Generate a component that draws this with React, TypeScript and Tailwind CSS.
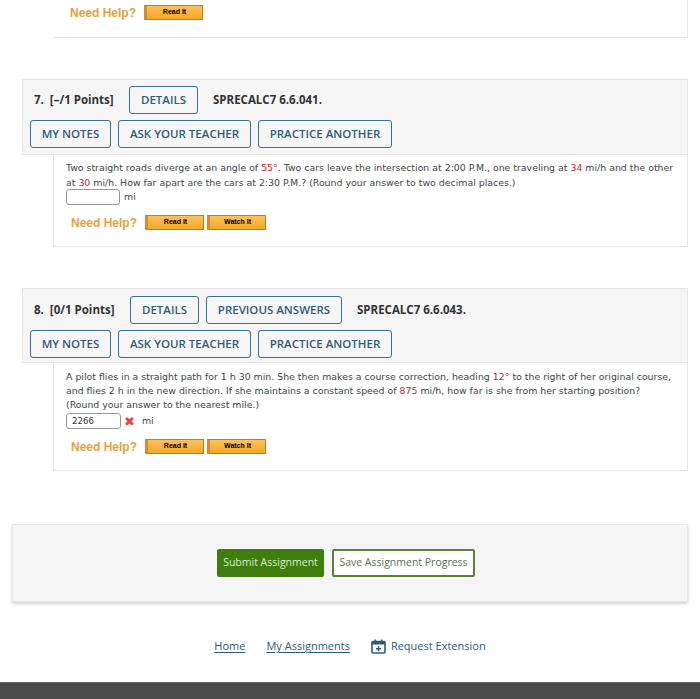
import React from "react";

const hdrFont = { fontFamily: '"Open Sans", "Liberation Sans", sans-serif' };

function HelpBtn({ label }: { label: string }) {
  return (
    <div
      className="w-[59px] h-[15px] flex items-center justify-center border border-[#b77f2a] border-l-[3px] border-l-[#d38f2a] bg-gradient-to-b from-[#fcc15a] to-[#f5a623] text-[7px] font-bold text-black"
      style={{ fontFamily: '"Liberation Sans", Arial, sans-serif' }}
    >
      {label}
    </div>
  );
}

function NeedHelp({ watch }: { watch?: boolean }) {
  return (
    <div className="flex items-center">
      <span
        className="text-[12px] font-bold text-[#e6a13e] leading-none"
        style={{ fontFamily: '"Liberation Sans", Arial, sans-serif' }}
      >
        Need Help?
      </span>
      <div className="ml-[8px] flex gap-[3px]">
        <HelpBtn label="Read It" />
        {watch && <HelpBtn label="Watch It" />}
      </div>
    </div>
  );
}

function OBtn({ children, w }: { children: React.ReactNode; w: string }) {
  return (
    <div
      className={`${w} h-[28px] flex items-center justify-center rounded-[3px] border-[1.5px] border-[#3d6d89] bg-[#f5f5f5] text-[11.5px] font-semibold text-[#2e5b7a] whitespace-nowrap`}
      style={hdrFont}
    >
      {children}
    </div>
  );
}

function Red({ children }: { children: React.ReactNode }) {
  return <span className="text-[#c4242b]">{children}</span>;
}

const bodyFont = { fontFamily: '"DejaVu Sans", Verdana, sans-serif' };

export default function App() {
  return (
    <div className="w-[700px] h-[699px] bg-white flex flex-col overflow-hidden">
      {/* top card remainder */}
      <div className="ml-[53px] w-[635px] h-[38px] border-r border-b border-[#e6e6e6] pl-[17px] pt-[5px]">
        <NeedHelp />
      </div>

      {/* Question 7 */}
      <div className="mt-[41px] ml-[22px] w-[666px] h-[76px] bg-[#f5f5f5] border border-[#e6e6e6] pl-[7px] pt-[6px] flex flex-col gap-[6px]">
        <div className="flex items-center">
          <span className="ml-[4px] text-[11.5px] font-bold text-[#333] w-[95px]" style={hdrFont}>
            7.&nbsp; [–/1 Points]
          </span>
          <OBtn w="w-[69px]">DETAILS</OBtn>
          <span className="ml-[15px] text-[11.5px] font-bold text-[#333]" style={hdrFont}>
            SPRECALC7 6.6.041.
          </span>
        </div>
        <div className="flex gap-[7px]">
          <OBtn w="w-[81px]">MY NOTES</OBtn>
          <OBtn w="w-[133px]">ASK YOUR TEACHER</OBtn>
          <OBtn w="w-[134px]">PRACTICE ANOTHER</OBtn>
        </div>
      </div>
      <div className="ml-[53px] w-[635px] h-[92px] border-l border-r border-b border-[#e6e6e6] pl-[12px] pr-[8px] pt-[5px]">
        <p className="text-[9.4px] leading-[15px] text-[#444]" style={bodyFont}>
          Two straight roads diverge at an angle of <Red>55°</Red>. Two cars leave the intersection at 2:00 P.M., one traveling at <Red>34</Red> mi/h and the other at <Red>30</Red> mi/h. How far apart are the cars at 2:30 P.M.? (Round your answer to two decimal places.)
        </p>
        <div className="flex items-center mt-[-1px]">
          <div className="w-[54px] h-[16px] border border-[#999] rounded-[3px] bg-white" />
          <span className="ml-[4px] text-[9.4px] text-[#444]" style={bodyFont}>mi</span>
        </div>
        <div className="mt-[10px] pl-[5px]">
          <NeedHelp watch />
        </div>
      </div>

      {/* Question 8 */}
      <div className="mt-[41px] ml-[22px] w-[666px] h-[75px] bg-[#f5f5f5] border border-[#e6e6e6] pl-[7px] pt-[7px] flex flex-col gap-[6px]">
        <div className="flex items-center">
          <span className="ml-[4px] text-[11.5px] font-bold text-[#333] w-[96px]" style={hdrFont}>
            8.&nbsp; [0/1 Points]
          </span>
          <OBtn w="w-[69px]">DETAILS</OBtn>
          <div className="ml-[7px]">
            <OBtn w="w-[136px]">PREVIOUS ANSWERS</OBtn>
          </div>
          <span className="ml-[15px] text-[11.5px] font-bold text-[#333]" style={hdrFont}>
            SPRECALC7 6.6.043.
          </span>
        </div>
        <div className="flex gap-[7px]">
          <OBtn w="w-[81px]">MY NOTES</OBtn>
          <OBtn w="w-[133px]">ASK YOUR TEACHER</OBtn>
          <OBtn w="w-[134px]">PRACTICE ANOTHER</OBtn>
        </div>
      </div>
      <div className="ml-[53px] w-[635px] h-[108px] border-l border-r border-b border-[#e6e6e6] pl-[12px] pr-[4px] pt-[7px]">
        <p className="text-[9.4px] leading-[14px] text-[#444] whitespace-nowrap" style={bodyFont}>
          A pilot flies in a straight path for 1 h 30 min. She then makes a course correction, heading <Red>12°</Red> to the right of her original course,
          <br />
          and flies 2 h in the new direction. If she maintains a constant speed of <Red>875</Red> mi/h, how far is she from her starting position?
          <br />
          (Round your answer to the nearest mile.)
        </p>
        <div className="flex items-center mt-[1px]">
          <div className="w-[55px] h-[16px] border border-[#999] rounded-[3px] bg-white flex items-center pl-[5px] text-[8.6px] text-[#333]" style={bodyFont}>
            2266
          </div>
          <span className="ml-[3px] text-[13px] font-bold text-[#e04848] leading-none" style={{ fontFamily: '"DejaVu Sans", sans-serif' }}>✖</span>
          <span className="ml-[7px] text-[9.4px] text-[#444]" style={bodyFont}>mi</span>
        </div>
        <div className="mt-[10px] pl-[5px]">
          <NeedHelp watch />
        </div>
      </div>

      {/* Submit box */}
      <div className="mt-[53px] ml-[12px] w-[676px] h-[78px] bg-[#f5f5f5] border border-[#e8e8e8] shadow-[0_2px_3px_rgba(0,0,0,0.18)] flex items-center justify-center gap-[8px] pr-[8px]">
        <div className="w-[107px] h-[28px] rounded-[2px] bg-[#3e7d0e] flex items-center justify-center text-[10.5px] text-[#dcebcf]" style={hdrFont}>
          Submit Assignment
        </div>
        <div className="w-[143px] h-[28px] rounded-[2px] bg-white border-2 border-[#5b7f3e] flex items-center justify-center text-[10.5px] text-[#5d6e54]" style={hdrFont}>
          Save Assignment Progress
        </div>
      </div>

      {/* Footer links */}
      <div className="mt-[36px] flex items-center justify-center text-[11px] text-[#2d5a7b]" style={hdrFont}>
        <span className="underline underline-offset-2">Home</span>
        <span className="ml-[21px] underline underline-offset-2">My Assignments</span>
        <svg className="ml-[21px]" width="15" height="15" viewBox="0 0 15 15">
          <rect x="1" y="2.5" width="13" height="11.5" rx="1" fill="none" stroke="#2d5a7b" strokeWidth="1.6" />
          <rect x="1" y="2.5" width="13" height="3" fill="#2d5a7b" />
          <rect x="3.5" y="0.5" width="1.6" height="3" fill="#2d5a7b" />
          <rect x="9.9" y="0.5" width="1.6" height="3" fill="#2d5a7b" />
          <path d="M7.5 7.2v5M5 9.7h5" stroke="#2d5a7b" strokeWidth="1.5" />
        </svg>
        <span className="ml-[5px]">Request Extension</span>
      </div>

      <div className="mt-auto h-[17px] bg-[#4b4b4b] border-t border-[#6a6a6a]" />
    </div>
  );
}
